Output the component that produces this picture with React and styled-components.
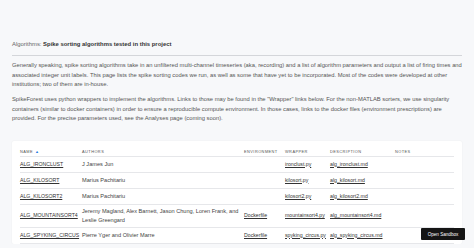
import React from 'react'
import styled, { createGlobalStyle } from 'styled-components'

const GlobalStyle = createGlobalStyle`
    html, body {
        margin: 0;
        padding: 0;
        background: #f7f8fa;
        font-family: "Liberation Sans", Arial, sans-serif;
    }
`

const Page = styled.div`
    padding: 40px 12px 0 12px;
    color: #555;
`

const Heading = styled.div`
    font-size: 5.9px;
    line-height: 8px;
    color: #666;
    padding-bottom: 7px;
    border-bottom: 1px solid #d4d6da;
    b {
        color: #333;
    }
`

const Para = styled.p`
    font-size: 5.8px;
    line-height: 9.5px;
    margin: 5px 0 0 0;
    & + & {
        margin-top: 5.5px;
    }
`

const Card = styled.div`
    margin-top: 17px;
    width: 450px;
    background: #fff;
    border-radius: 2px;
    box-shadow: 0 0 2px rgba(0, 0, 0, 0.06);
    padding: 6px 8px 0 8px;
    box-sizing: border-box;
`

const Table = styled.table`
    width: 100%;
    border-collapse: collapse;
    table-layout: fixed;
    font-size: 5.6px;
    color: #444;
`

const Th = styled.th`
    text-align: left;
    font-weight: normal;
    font-size: 3.9px;
    line-height: 5px;
    letter-spacing: 0.45px;
    color: #555;
    padding: 2px 0;
    border-bottom: 1px solid #e6e7ea;
`

const Td = styled.td`
    height: 16px;
    box-sizing: border-box;
    padding: 2px 0;
    line-height: 9px;
    vertical-align: middle;
    border-bottom: 1px solid #e6e7ea;
`

const Link = styled.a`
    color: #333;
    font-size: 5.2px;
    text-decoration: underline;
`

const SortArrow = styled.span`
    color: #2a7ae2;
    font-size: 4px;
    margin-left: 2px;
`

const SandboxButton = styled.div`
    position: fixed;
    left: 421px;
    top: 228px;
    width: 44px;
    height: 12px;
    background: #151515;
    color: #fff;
    font-size: 4.6px;
    border-radius: 1px;
    display: flex;
    align-items: center;
    justify-content: center;
`

const rows = [
    { name: 'ALG_IRONCLUST', authors: 'J James Jun', env: '', wrapper: 'ironclust.py', desc: 'alg_ironclust.md' },
    { name: 'ALG_KILOSORT', authors: 'Marius Pachitariu', env: '', wrapper: 'kilosort.py', desc: 'alg_kilosort.md' },
    { name: 'ALG_KILOSORT2', authors: 'Marius Pachitariu', env: '', wrapper: 'kilosort2.py', desc: 'alg_kilosort2.md' },
    { name: 'ALG_MOUNTAINSORT4', authors: 'Jeremy Magland, Alex Barnett, Jason Chung, Loren Frank, and Leslie Greengard', env: 'Dockerfile', wrapper: 'mountainsort4.py', desc: 'alg_mountainsort4.md' },
    { name: 'ALG_SPYKING_CIRCUS', authors: 'Pierre Yger and Olivier Marre', env: 'Dockerfile', wrapper: 'spyking_circus.py', desc: 'alg_spyking_circus.md' },
]

const App = () => {
    return <Page>
        <GlobalStyle />
        <Heading>
            Algorithms: <b>Spike sorting algorithms tested in this project</b>
        </Heading>
        <Para>
            Generally speaking, spike sorting algorithms take in an unfiltered multi-channel timeseries (aka, recording) and a list of algorithm parameters and output a list of firing times and associated integer unit labels. This page lists the spike sorting codes we run, as well as some that have yet to be incorporated. Most of the codes were developed at other institutions; two of them are in-house.
        </Para>
        <Para>
            SpikeForest uses python wrappers to implement the algorithms. Links to those may be found in the "Wrapper" links below. For the non-MATLAB sorters, we use singularity containers (similar to docker containers) in order to ensure a reproducible compute environment. In those cases, links to the docker files (environment prescriptions) are provided. For the precise parameters used, see the Analyses page (coming soon).
        </Para>
        <Card>
            <Table>
                <colgroup>
                    <col style={{ width: 62 }} />
                    <col style={{ width: 162 }} />
                    <col style={{ width: 41 }} />
                    <col style={{ width: 45 }} />
                    <col style={{ width: 65 }} />
                    <col />
                </colgroup>
                <thead>
                    <tr>
                        <Th>NAME<SortArrow>▲</SortArrow></Th>
                        <Th>AUTHORS</Th>
                        <Th>ENVIRONMENT</Th>
                        <Th>WRAPPER</Th>
                        <Th>DESCRIPTION</Th>
                        <Th>NOTES</Th>
                    </tr>
                </thead>
                <tbody>
                    {rows.map(r => <tr key={r.name}>
                        <Td><Link href="#">{r.name}</Link></Td>
                        <Td>{r.authors}</Td>
                        <Td>{r.env && <Link href="#">{r.env}</Link>}</Td>
                        <Td><Link href="#">{r.wrapper}</Link></Td>
                        <Td><Link href="#">{r.desc}</Link></Td>
                        <Td></Td>
                    </tr>)}
                </tbody>
            </Table>
        </Card>
        <SandboxButton>Open Sandbox</SandboxButton>
    </Page>
}

export default App
